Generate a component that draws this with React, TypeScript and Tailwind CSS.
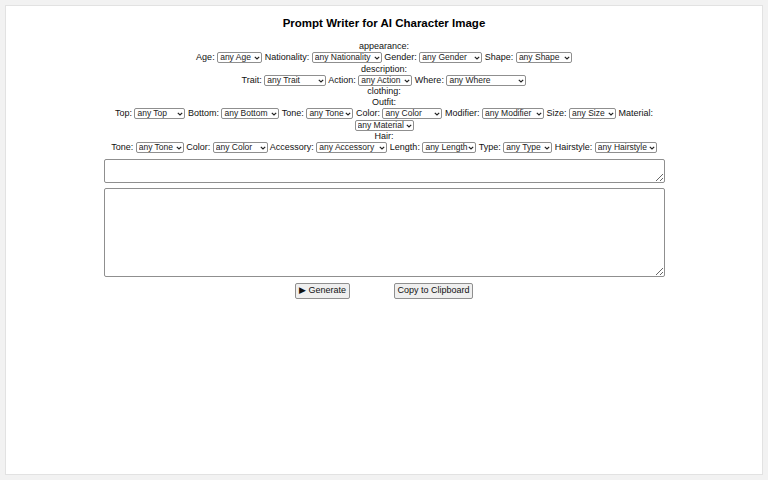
import { useState } from 'react';

type Field = { label: string; name: string; w: string; extra?: string[] };

// Widths are fixed so the rows wrap the same way the original page does
const appearance: Field[] = [
  { label: 'Age', name: 'Age', w: 'w-[45px]', extra: ['child', 'young adult', 'middle-aged', 'elderly'] },
  { label: 'Nationality', name: 'Nationality', w: 'w-[70px]', extra: ['Japanese', 'French', 'Brazilian'] },
  { label: 'Gender', name: 'Gender', w: 'w-[63px]', extra: ['male', 'female'] },
  { label: 'Shape', name: 'Shape', w: 'w-[56px]', extra: ['slim', 'athletic', 'curvy'] },
];

const description: Field[] = [
  { label: 'Trait', name: 'Trait', w: 'w-[62px]', extra: ['cheerful', 'mysterious'] },
  { label: 'Action', name: 'Action', w: 'w-[54px]', extra: ['standing', 'sitting', 'running'] },
  { label: 'Where', name: 'Where', w: 'w-[80px]', extra: ['in a forest', 'on a rooftop'] },
];

const outfit: Field[] = [
  { label: 'Top', name: 'Top', w: 'w-[51px]', extra: ['t-shirt', 'blouse', 'hoodie'] },
  { label: 'Bottom', name: 'Bottom', w: 'w-[58px]', extra: ['jeans', 'skirt'] },
  { label: 'Tone', name: 'Tone', w: 'w-[47px]', extra: ['pastel', 'dark'] },
  { label: 'Color', name: 'Color', w: 'w-[60px]', extra: ['red', 'blue', 'black'] },
  { label: 'Modifier', name: 'Modifier', w: 'w-[62px]', extra: ['striped', 'plaid'] },
  { label: 'Size', name: 'Size', w: 'w-[47px]', extra: ['oversized', 'fitted'] },
  { label: 'Material', name: 'Material', w: 'w-[59px]', extra: ['cotton', 'leather', 'denim'] },
];

const hair: Field[] = [
  { label: 'Tone', name: 'Tone', w: 'w-[48px]', extra: ['light', 'dark'] },
  { label: 'Color', name: 'Color', w: 'w-[55px]', extra: ['blonde', 'black', 'red'] },
  { label: 'Accessory', name: 'Accessory', w: 'w-[71px]', extra: ['ribbon', 'hairpin'] },
  { label: 'Length', name: 'Length', w: 'w-[54px]', extra: ['short', 'long'] },
  { label: 'Type', name: 'Type', w: 'w-[49px]', extra: ['straight', 'wavy', 'curly'] },
  { label: 'Hairstyle', name: 'Hairstyle', w: 'w-[62px]', extra: ['ponytail', 'bob', 'braids'] },
];

function Chevron() {
  return (
    <svg
      className="absolute right-[2px] top-[4px] pointer-events-none"
      width="6"
      height="4"
      viewBox="0 0 6 4"
      fill="none"
    >
      <path d="M0.8 0.8L3 3L5.2 0.8" stroke="#222" strokeWidth="1.2" />
    </svg>
  );
}

function FieldRow({ fields }: { fields: Field[] }) {
  return (
    <div className="leading-[11.5px]">
      {fields.map((f, i) => (
        <span key={f.label + i}>
          {f.label}:{' '}
          <span className={`relative inline-block align-middle ${f.w} h-[11px]`}>
            <select
              className="appearance-none block w-full h-full border border-[#8f8f8f] rounded-[2px] bg-white text-[8.5px] leading-[9px] py-0 pl-[2px] pr-[7px] text-[#222]"
              defaultValue=""
            >
              <option value="">any {f.name}</option>
              {f.extra?.map((o) => (
                <option key={o} value={o}>
                  {o}
                </option>
              ))}
            </select>
            <Chevron />
          </span>
          {i < fields.length - 1 ? ' ' : ''}
        </span>
      ))}
    </div>
  );
}

function Heading({ children }: { children: React.ReactNode }) {
  return <div className="leading-[11px]">{children}</div>;
}

export default function App() {
  const [prompt, setPrompt] = useState('');

  return (
    <div className="min-h-[480px] bg-[#f2f2f2] p-[5px] font-['Liberation_Sans',Arial,sans-serif] text-[9px] text-[#111]">
      <div className="h-[470px] bg-white border border-[#e2e2e2] pt-[10px]">
        <h1 className="text-center text-[11.5px] font-bold leading-[14px] text-black">
          Prompt Writer for AI Character Image
        </h1>

        <div className="mx-auto w-[561px] mt-[11px] text-center">
          <Heading>appearance:</Heading>
          <FieldRow fields={appearance} />
          <Heading>description:</Heading>
          <FieldRow fields={description} />
          <Heading>clothing:</Heading>
          <Heading>Outfit:</Heading>
          <FieldRow fields={outfit} />
          <Heading>Hair:</Heading>
          <FieldRow fields={hair} />

          <textarea
            className="block w-full h-[24px] mt-[5px] border border-[#8f8f8f] rounded-[2px] bg-white"
            value={prompt}
            onChange={(e) => setPrompt(e.target.value)}
          />
          <textarea className="block w-full h-[89px] mt-[5px] border border-[#8f8f8f] rounded-[2px] bg-white" />

          <div className="flex justify-center gap-[44px] mt-[6px]">
            <button className="h-[16px] w-[55px] border border-[#8f8f8f] rounded-[2px] bg-[#efefef] text-[9px] leading-none">
              ▶ Generate
            </button>
            <button className="h-[16px] w-[79px] border border-[#8f8f8f] rounded-[2px] bg-[#efefef] text-[9px] leading-none">
              Copy to Clipboard
            </button>
          </div>
        </div>
      </div>
    </div>
  );
}
